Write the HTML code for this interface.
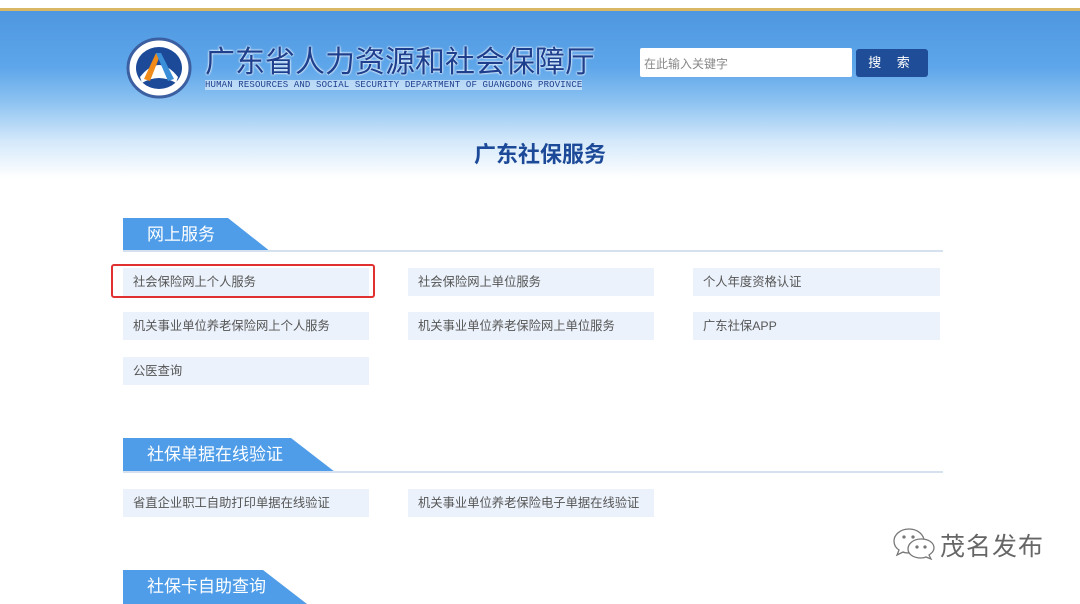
<!DOCTYPE html>
<html><head><meta charset="utf-8"><style>
*{margin:0;padding:0;box-sizing:border-box}
body{width:1080px;height:591px;overflow:hidden;background:#fff;position:relative;font-family:"Liberation Sans","Noto Sans CJK SC",sans-serif}
.hdr{position:absolute;left:0;top:8px;width:1080px;height:170px;background:linear-gradient(#4d97e0 0%,#5ea6ea 35%,#8cc2f1 55%,#d3e8fa 78%,#fff 100%)}
.gold{position:absolute;left:0;top:8px;width:1080px;height:3px;background:#d9b765}
.title{position:absolute;left:205px;top:37px;font-size:30px;color:#1e3f8e;white-space:nowrap;text-shadow:0 0 2px #fff,0 0 2px #fff}
.en{position:absolute;left:205px;top:80px;font-size:9px;color:#1e3f8e;font-family:"Liberation Mono",monospace;white-space:nowrap;background:rgba(255,255,255,.5);letter-spacing:.15px}
.inp{position:absolute;left:640px;top:48px;width:212px;height:29px;background:#fff;border-radius:2px;font-size:12px;color:#888;padding:7px 4px}
.btn{position:absolute;left:856px;top:49px;width:72px;height:28px;background:#1f4d98;border-radius:3px;color:#fff;font-size:13px;text-align:center;line-height:28px;letter-spacing:6px}
.h1{position:absolute;left:0;width:1080px;top:137px;text-align:center;font-size:22px;font-weight:bold;color:#1c4a98}
.tab{position:absolute;left:123px;height:34px;background:#4f9de8;color:#fff;font-size:17px;line-height:34px;padding-left:24px}
.line{position:absolute;left:123px;width:820px;height:2px;background:#d5e1ef}
.it{position:absolute;width:246px;height:28px;background:#ebf2fb;color:#555;font-size:12.3px;line-height:28px;padding-left:10px;white-space:nowrap}
.red{position:absolute;left:111px;top:264px;width:264px;height:34px;border:2px solid #e03030;border-radius:3px}
.wm{position:absolute;left:940px;top:527px;font-size:25px;color:#666;letter-spacing:1px}
</style></head><body>
<div class="hdr"></div><div class="gold"></div>
<svg style="position:absolute;left:126px;top:37px" width="66" height="62" viewBox="0 0 66 62">
<ellipse cx="33" cy="31" rx="31" ry="29" fill="#fff" stroke="#3b5fa0" stroke-width="3"/>
<ellipse cx="33" cy="31" rx="23" ry="21" fill="#1c4a98"/>
<path d="M14 40 Q33 16 52 40 L50 46 Q33 36 16 46Z" fill="#fff"/>
<path d="M18 42 L30 16 L35 16 L24 44Z" fill="#f08a18"/>
<path d="M30 16 L35 16 L48 42 L42 44Z" fill="#3a8fd8"/>
</svg>
<div class="title">广东省人力资源和社会保障厅</div>
<div class="en">HUMAN RESOURCES AND SOCIAL SECURITY DEPARTMENT OF GUANGDONG PROVINCE</div>
<div class="inp">在此输入关键字</div>
<div class="btn">搜 索</div>
<div class="h1">广东社保服务</div>

<div class="tab" style="top:218px;width:148px;clip-path:polygon(0 0,105px 0,148px 100%,0 100%)">网上服务</div>
<div class="line" style="top:250px"></div>
<div class="it" style="left:123px;top:268px">社会保险网上个人服务</div>
<div class="it" style="left:408px;top:268px">社会保险网上单位服务</div>
<div class="it" style="left:693px;top:268px;width:247px">个人年度资格认证</div>
<div class="it" style="left:123px;top:312px">机关事业单位养老保险网上个人服务</div>
<div class="it" style="left:408px;top:312px">机关事业单位养老保险网上单位服务</div>
<div class="it" style="left:693px;top:312px;width:247px">广东社保APP</div>
<div class="it" style="left:123px;top:357px">公医查询</div>
<div class="red"></div>

<div class="tab" style="top:438px;width:212px;clip-path:polygon(0 0,168px 0,212px 100%,0 100%)">社保单据在线验证</div>
<div class="line" style="top:471px"></div>
<div class="it" style="left:123px;top:489px">省直企业职工自助打印单据在线验证</div>
<div class="it" style="left:408px;top:489px">机关事业单位养老保险电子单据在线验证</div>

<div class="tab" style="top:570px;width:184px;clip-path:polygon(0 0,140px 0,184px 100%,0 100%)">社保卡自助查询</div>

<svg style="position:absolute;left:892px;top:526px" width="44" height="34" viewBox="0 0 44 34" fill="#fff" stroke="#777" stroke-width="1.3">
<path d="M17 3 C8 3 2 9 2 15 C2 19 4 22 7 24 L5 29 L11 26 C13 27 15 27 17 27 C27 27 32 21 32 15 C32 9 26 3 17 3Z"/>
<path d="M29 13 C21 13 16 18 16 23 C16 28 21 32 29 32 C31 32 32 32 34 31 L39 33 L37 29 C40 27 42 25 42 22 C42 17 37 13 29 13Z"/>
<circle cx="12" cy="11" r="1" fill="#777"/><circle cx="21" cy="11" r="1" fill="#777"/>
<circle cx="25" cy="21" r="1" fill="#777"/><circle cx="33" cy="21" r="1" fill="#777"/>
</svg>
<div class="wm">茂名发布</div>
</body></html>
